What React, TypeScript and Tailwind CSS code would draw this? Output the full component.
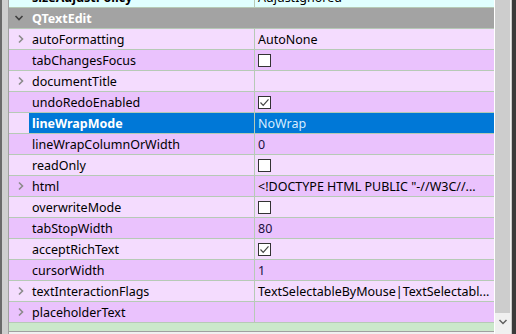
import React from "react";

type Row = {
  name: string;
  value?: string;
  check?: boolean;
  expand?: boolean;
  num?: boolean;
};

const rows: Row[] = [
  { name: "autoFormatting", value: "AutoNone", expand: true },
  { name: "tabChangesFocus", check: false },
  { name: "documentTitle", expand: true },
  { name: "undoRedoEnabled", check: true },
  { name: "lineWrapMode", value: "NoWrap" },
  { name: "lineWrapColumnOrWidth", value: "0", num: true },
  { name: "readOnly", check: false },
  { name: "html", value: '<!DOCTYPE HTML PUBLIC "-//W3C//...', expand: true },
  { name: "overwriteMode", check: false },
  { name: "tabStopWidth", value: "80", num: true },
  { name: "acceptRichText", check: true },
  { name: "cursorWidth", value: "1", num: true },
  { name: "textInteractionFlags", value: "TextSelectableByMouse|TextSelectabl...", expand: true },
  { name: "placeholderText", expand: true },
];

function Chevron({ down, color }: { down?: boolean; color: string }) {
  return (
    <svg width="10" height="10" viewBox="0 0 10 10" className="shrink-0">
      {down ? (
        <path d="M1.5 3 L5 6.5 L8.5 3" fill="none" stroke={color} strokeWidth="1.6" />
      ) : (
        <path d="M3 1.5 L6.5 5 L3 8.5" fill="none" stroke={color} strokeWidth="1.6" />
      )}
    </svg>
  );
}

function CheckBox({ on }: { on: boolean }) {
  return (
    <div className="w-[13px] h-[13px] border border-[#333333] bg-white flex items-center justify-center">
      {on && (
        <svg width="11" height="11" viewBox="0 0 11 11">
          <path d="M1.5 5.5 L4.2 8.3 L9.5 2.3" fill="none" stroke="#444444" strokeWidth="1.2" />
        </svg>
      )}
    </div>
  );
}

export default function App() {
  return (
    <div
      className="w-[516px] h-[334px] flex bg-[#f0f0f0] overflow-hidden text-[12.5px] text-black"
      style={{ fontFamily: '"Noto Sans", "Liberation Sans", sans-serif' }}
    >
      {/* left frame */}
      <div className="w-[2px] bg-[#6a6a6a]" />
      <div className="w-[6px] bg-[#cfcfcf]" />
      <div className="w-px bg-[#a0a0a0]" />

      {/* tree */}
      <div className="w-[485px] flex flex-col overflow-hidden">
        {/* clipped row above */}
        <div className="h-[8px] overflow-hidden shrink-0 border-b border-[#b6cab6]">
          <div className="flex h-[20px] -mt-[13px] bg-[#e0ffff]">
            <div className="w-[246px] pl-[23px] pt-[2px] flex items-center font-bold border-r border-[#b6cab6]">
              sizeAdjustPolicy
            </div>
            <div className="flex-1 pl-[3px] pt-[2px] flex items-center">AdjustIgnored</div>
          </div>
        </div>

        {/* group header */}
        <div className="h-[21px] shrink-0 flex items-center bg-[#a3a3a3] border-b border-[#b6cab6]">
          <div className="w-[20px] pl-[5px] flex items-center">
            <Chevron down color="#404040" />
          </div>
          <span className="font-bold text-white pt-[2px] pl-[3px]">QTextEdit</span>
        </div>

        {rows.map((r, i) => {
          const light = i % 2 === 0;
          const bg = light ? "bg-[#f4dcfe]" : "bg-[#eac2fd]";
          const sel = r.name === "lineWrapMode";
          return (
            <div key={r.name} className={`h-[21px] shrink-0 flex border-b border-[#b6cab6] ${bg}`}>
              <div className="w-[20px] pl-[7px] flex items-center">
                {r.expand && <Chevron color="#8a8a8a" />}
              </div>
              <div
                className={`w-[226px] flex items-center pl-[3px] pt-[2px] border-r border-[#b6cab6] ${
                  sel ? "bg-[#0078d7] text-white font-bold" : ""
                }`}
              >
                {r.name}
              </div>
              <div
                className={`flex-1 flex items-center pl-[3px] whitespace-nowrap overflow-hidden ${
                  r.check !== undefined ? "" : "pt-[2px]"
                } ${sel ? "bg-[#0078d7] text-[#d6ecff]" : ""} ${r.num ? "text-[#1a1040]" : ""}`}
              >
                {r.check !== undefined ? <CheckBox on={r.check} /> : r.value}
              </div>
            </div>
          );
        })}

        <div className="h-[9px] shrink-0 bg-[#cbe8cb] border-b border-[#a0a0a0]" />
      </div>

      {/* scrollbar */}
      <div className="w-px bg-white" />
      <div className="w-[15px] flex flex-col">
        <div className="flex-1 bg-[#cdcdcd]" />
        <div className="h-[18px] bg-[#f0f0f0] flex items-center justify-center">
          <svg width="10" height="8" viewBox="0 0 10 8">
            <path d="M1.5 2 L5 5.5 L8.5 2" fill="none" stroke="#606060" strokeWidth="1.5" />
          </svg>
        </div>
        <div className="h-[3px] bg-[#f0f0f0]" />
      </div>
      <div className="w-px bg-[#f0f0f0]" />
      <div className="w-px bg-[#c8c8c8]" />
      <div className="flex-1 bg-[#3a3a3a]" />
    </div>
  );
}
